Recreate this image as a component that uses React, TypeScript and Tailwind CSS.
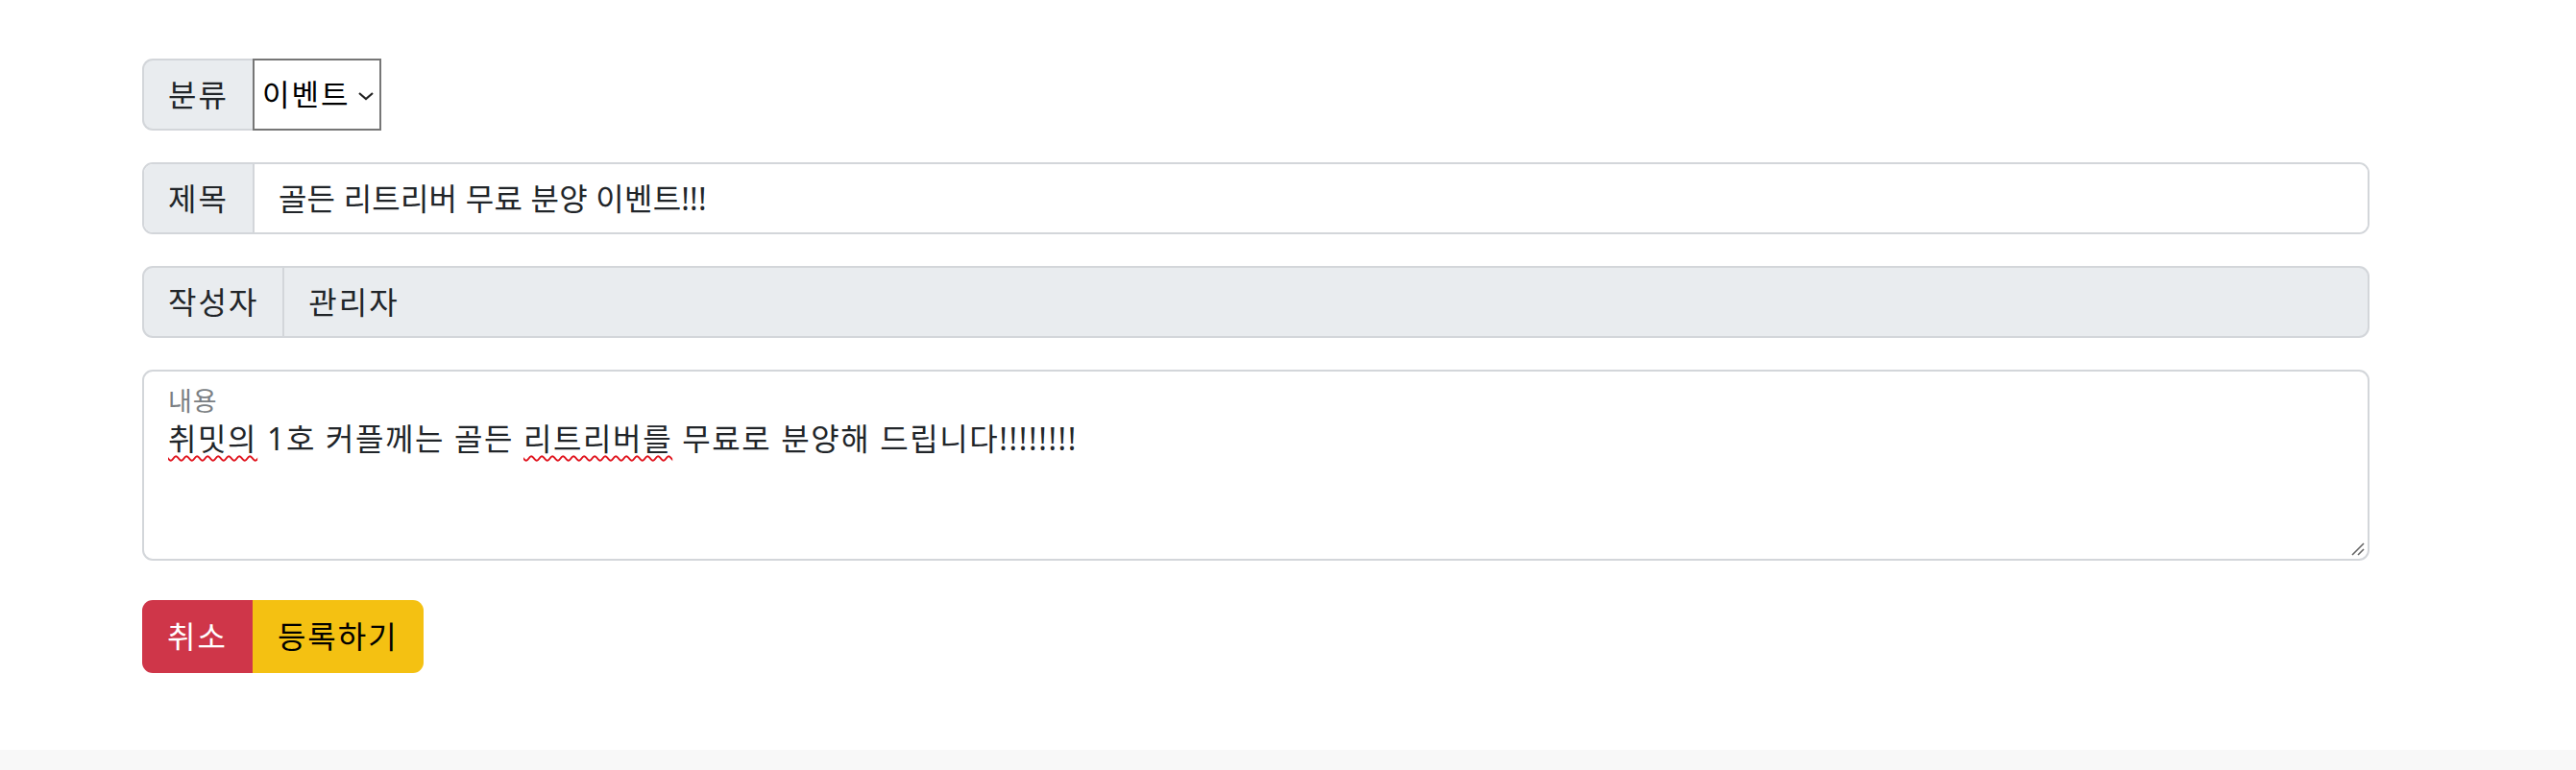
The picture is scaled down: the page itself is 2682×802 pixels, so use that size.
const Chevron = () => (
  <svg width="18" height="10" viewBox="0 0 18 10" className="absolute right-[5px] top-[32px]">
    <path d="M2 2 L9 8 L16 2" fill="none" stroke="#222" strokeWidth="2.2" />
  </svg>
)

const Resizer = () => (
  <svg width="16" height="16" viewBox="0 0 16 16" className="absolute bottom-[3px] right-[3px]">
    <path d="M15 3 L3 15" stroke="#666" strokeWidth="1.6" />
    <path d="M15 9 L9 15" stroke="#666" strokeWidth="1.6" />
  </svg>
)

const App = () => {
  return (
    <div className="font-['Noto_Sans','Noto_Sans_CJK_KR',sans-serif] text-[#212529] bg-white">
      <main className="h-[781px] pt-[61px] pl-[148px]">
        <div className="w-[2319px] flex flex-col">
          {/* 분류 */}
          <div className="flex h-[75px] w-fit">
            <span className="flex items-center px-[25px] bg-[#e9ecef] border-2 border-r-0 border-[#d3d6da] rounded-l-[11px] text-[32px] tracking-[2px] leading-none">
              분류
            </span>
            <div className="relative flex items-center w-[134px] border-2 border-[#767676] bg-white pl-[8px] text-[31px] tracking-[2px] text-black leading-none">
              이벤트
              <Chevron />
            </div>
          </div>

          {/* 제목 */}
          <div className="mt-[33px] flex h-[75px] border-2 border-[#d3d6da] rounded-[11px] overflow-hidden text-[32px] leading-none">
            <span className="flex items-center px-[25px] bg-[#e9ecef] border-r-2 border-[#d3d6da] tracking-[2px]">제목</span>
            <span className="flex items-center px-[25px] bg-white flex-1 tracking-[0.2px]">골든 리트리버 무료 분양 이벤트!!!</span>
          </div>

          {/* 작성자 */}
          <div className="mt-[33px] flex h-[75px] border-2 border-[#d3d6da] rounded-[11px] overflow-hidden text-[32px] leading-none bg-[#e9ecef]">
            <span className="flex items-center px-[25px] border-r-2 border-[#d3d6da] tracking-[2px]">작성자</span>
            <span className="flex items-center px-[25px] flex-1 tracking-[2px]">관리자</span>
          </div>

          {/* 내용 */}
          <div className="relative mt-[33px] h-[199px] border-2 border-[#d3d6da] rounded-[11px] bg-white px-[25px] pt-[16px]">
            <div className="text-[27px] leading-[30px] text-[#7b7f84] tracking-[1px]">내용</div>
            <div className="text-[32px] leading-[48px] tracking-[1.6px]">
              <span className="underline decoration-wavy decoration-[#e0141e] decoration-[2px] underline-offset-[5px]">취밋의</span>{' '}
              1호 커플께는 골든{' '}
              <span className="underline decoration-wavy decoration-[#e0141e] decoration-[2px] underline-offset-[5px]">리트리버를</span>{' '}
              무료로 분양해 드립니다!!!!!!!!
            </div>
            <Resizer />
          </div>

          {/* 버튼 */}
          <div className="mt-[41px] flex h-[76px] w-fit text-[32px] tracking-[2px] leading-none">
            <button className="flex items-center px-[26px] bg-[#cf3649] text-white rounded-l-[11px]">취소</button>
            <button className="flex items-center px-[26px] bg-[#f4c112] text-black rounded-r-[11px]">등록하기</button>
          </div>
        </div>
      </main>
      <footer className="h-[40px] bg-[#f8f8f8]" />
    </div>
  )
}

export default App
